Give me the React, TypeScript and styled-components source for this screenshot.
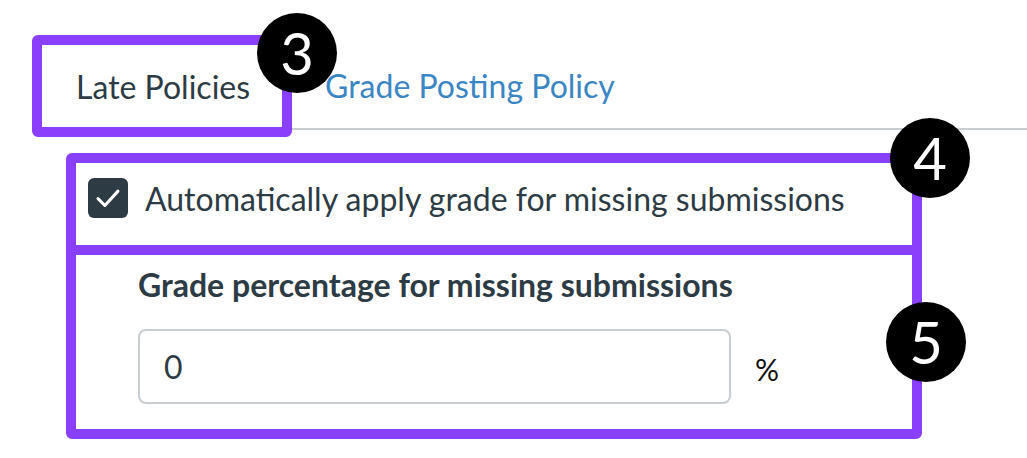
import React from "react";
import styled, { createGlobalStyle } from "styled-components";

const GlobalStyle = createGlobalStyle`
    html, body {
        margin: 0;
        padding: 0;
        background: #ffffff;
        font-family: Lato, "Open Sans", "Liberation Sans", sans-serif;
        color: #2d3b45;
    }
`;

const PURPLE = "#893ffc";

const Page = styled.div`
    width: 1027px;
    height: 458px;
    overflow: hidden;
    padding-top: 35px;
    box-sizing: border-box;
`;

const TabRow = styled.div`
    display: flex;
    padding-left: 32px;
`;

const ActiveTab = styled.div`
    position: relative;
    display: flex;
    align-items: center;
    height: 102px;
    box-sizing: border-box;
    padding: 0 32px 0 34px;
    border: 10px solid ${PURPLE};
    border-radius: 6px;
    font-size: 32px;
    color: #2d3b45;
`;

const TabRest = styled.div`
    flex: 1;
    display: flex;
    align-items: center;
    margin-bottom: 7px;
    padding-left: 33px;
    padding-top: 8px;
    border-bottom: 2px solid #c7cdd1;
    font-size: 32px;
    color: #3b86c4;
`;

const Badge = styled.div<{ $top: number; $right: number }>`
    position: absolute;
    top: ${(p) => p.$top}px;
    right: ${(p) => p.$right}px;
    width: 80px;
    height: 80px;
    border-radius: 50%;
    background: #000000;
    color: #ffffff;
    display: flex;
    align-items: center;
    justify-content: center;
    font-size: 58px;
    font-weight: 400;
    line-height: 1;
`;

const Section = styled.div`
    margin-left: 66px;
    width: 856px;
`;

const HighlightBox = styled.div`
    position: relative;
    box-sizing: border-box;
    border: 10px solid ${PURPLE};
    border-radius: 6px;
`;

const CheckRow = styled(HighlightBox)`
    margin-top: 16px;
    height: 102px;
    display: flex;
    align-items: center;
    gap: 17px;
    padding: 0 12px 12px 12px;
    font-size: 32px;
`;

const CheckBox = styled.span`
    width: 40px;
    height: 40px;
    border-radius: 6px;
    background: #2d3b45;
    display: flex;
    align-items: center;
    justify-content: center;
    flex-shrink: 0;
`;

const FieldBox = styled(HighlightBox)`
    margin-top: -10px;
    height: 194px;
    padding: 11px 0 0 62px;
`;

const FieldLabel = styled.div`
    font-size: 32px;
    font-weight: 700;
    line-height: 38px;
    color: #2d3b45;
`;

const InputRow = styled.div`
    display: flex;
    align-items: center;
    margin-top: 25px;
`;

const NumberInput = styled.div`
    width: 593px;
    height: 75px;
    box-sizing: border-box;
    border: 2px solid #c7cdd1;
    border-radius: 8px;
    display: flex;
    align-items: center;
    padding-left: 24px;
    font-size: 32px;
    color: #2d3b45;
`;

const Unit = styled.span`
    margin-left: 24px;
    margin-top: 4px;
    font-size: 30px;
    color: #111111;
`;

export default function App() {
    return (
        <Page>
            <GlobalStyle />
            <TabRow>
                <ActiveTab>
                    Late Policies
                    <Badge $top={-32} $right={-55}>3</Badge>
                </ActiveTab>
                <TabRest>Grade Posting Policy</TabRest>
            </TabRow>
            <Section>
                <CheckRow>
                    <CheckBox>
                        <svg width="30" height="30" viewBox="0 0 24 24">
                            <polyline
                                points="4,12.5 9.5,18 20,6.5"
                                fill="none"
                                stroke="#ffffff"
                                strokeWidth="2.4"
                                strokeLinecap="round"
                                strokeLinejoin="round"
                            />
                        </svg>
                    </CheckBox>
                    Automatically apply grade for missing submissions
                    <Badge $top={-45} $right={-58}>4</Badge>
                </CheckRow>
                <FieldBox>
                    <FieldLabel>Grade percentage for missing submissions</FieldLabel>
                    <InputRow>
                        <NumberInput>0</NumberInput>
                        <Unit>%</Unit>
                    </InputRow>
                    <Badge $top={47} $right={-54}>5</Badge>
                </FieldBox>
            </Section>
        </Page>
    );
}
